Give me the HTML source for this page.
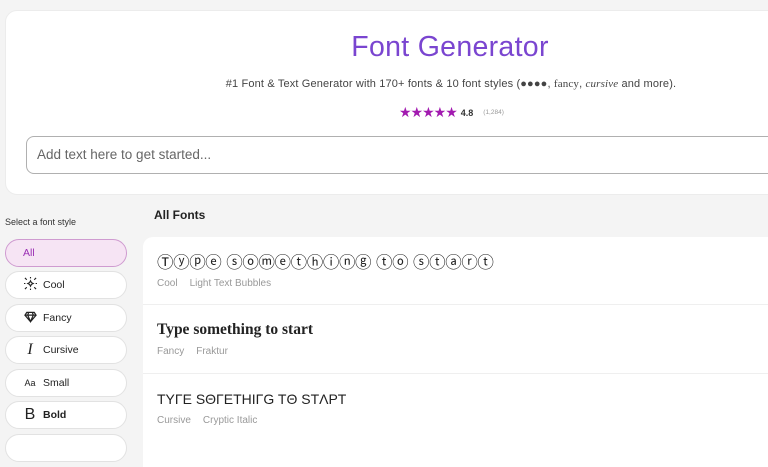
<!DOCTYPE html>
<html><head><meta charset="utf-8">
<style>
*{box-sizing:border-box;margin:0;padding:0}
html,body{width:768px;height:439px;overflow:hidden;background:#f4f4f4;font-family:"Liberation Sans","DejaVu Sans",sans-serif}
.card{position:absolute;left:5px;top:10px;width:800px;height:185px;background:#fff;border-radius:12px;border:1px solid #ececec}
.title{position:absolute;left:0;width:900px;top:31px;text-align:center;font-size:28.5px;color:#7a45d0;letter-spacing:0.3px}
.sub{position:absolute;left:0;width:902px;top:78px;text-align:center;font-size:11px;color:#444;letter-spacing:0.15px}
.rate{position:absolute;left:399px;top:104px;font-size:9px;color:#333;display:flex;align-items:center;gap:4px}
.rate .st{color:#a21ab0;font-size:14px;letter-spacing:-1px}
.rate .n{color:#999;font-size:6.5px;margin-left:6px}
.input{position:absolute;left:26px;top:136px;width:800px;height:38px;border:1.5px solid #b0b0b0;border-radius:8px;background:#fff;font-size:13.5px;color:#666;padding:10px 0 0 10px}
.lbl{position:absolute;left:5px;top:217px;font-size:9px;color:#333}
.btn{position:absolute;left:5px;width:122px;height:28px;border:1px solid #e2e2e2;border-radius:14px;background:#fff;font-size:10.5px;color:#222;display:flex;align-items:center;padding-left:17px;gap:6px}
.btn.on{background:#f6e4f4;border-color:#cf9bd0;color:#9a2fb3}
.ic{width:14px;text-align:center;font-size:13px}
.allf{position:absolute;left:154px;top:208px;font-size:12px;font-weight:bold;color:#222}
.res{position:absolute;left:143px;top:237px;width:700px;height:230px;background:#fff;border-radius:10px 0 0 0}
.row{position:absolute;left:0;width:700px;border-bottom:1px solid #efefef}
.row .t{position:absolute;left:14px;color:#222}
.row .m{position:absolute;left:14px;font-size:10px;color:#999}
.row .m span{margin-right:12px}
</style></head><body>
<div class="card"></div>
<div class="title">Font Generator</div>
<div class="sub">#1 Font &amp; Text Generator with 170+ fonts &amp; 10 font styles (<b>●●●●</b>, <span style="font-family:'Liberation Serif',serif">fancy</span>, <i style="font-family:'Liberation Serif',serif">cursive</i> and more).</div>
<div class="rate"><span class="st">★★★★★</span><b>4.8</b><span class="n">(1,284)</span></div>
<div class="input">Add text here to get started...</div>

<div class="lbl">Select a font style</div>
<div class="btn on" style="top:239px">All</div>
<div class="btn" style="top:271px"><span class="ic"><svg width="13" height="13" viewBox="0 0 14 14" fill="none" stroke="#222" stroke-width="1.2"><path d="M7 4 L8 6 L10 7 L8 8 L7 10 L6 8 L4 7 L6 6Z"/><path d="M1 1L3 3M13 1L11 3M1 13L3 11M13 13L11 11M7 0V1.5M7 12.5V14M0 7H1.5M12.5 7H14"/></svg></span>Cool</div>
<div class="btn" style="top:304px"><span class="ic"><svg width="13" height="12" viewBox="0 0 14 12" fill="none" stroke="#222" stroke-width="1.3"><path d="M3 1H11L13 4L7 11L1 4Z M1 4H13 M5 1L4 4L7 11L10 4L9 1"/></svg></span>Fancy</div>
<div class="btn" style="top:336px"><span class="ic" style="font-family:'Liberation Serif',serif;font-style:italic;font-size:16px">I</span>Cursive</div>
<div class="btn" style="top:369px"><span class="ic" style="font-size:9px">Aa</span>Small</div>
<div class="btn" style="top:401px"><span class="ic" style="font-size:16px;font-weight:normal">B</span><b>Bold</b></div>
<div class="btn" style="top:434px"></div>

<div class="allf">All Fonts</div>
<div class="res">
 <div class="row" style="top:0;height:68px">
  <div class="t" style="top:12px;font-family:'DejaVu Sans',sans-serif;font-size:16.5px;letter-spacing:-0.4px">Ⓣⓨⓟⓔ ⓢⓞⓜⓔⓣⓗⓘⓝⓖ ⓣⓞ ⓢⓣⓐⓡⓣ</div>
  <div class="m" style="top:41px"><span>Cool</span>Light Text Bubbles</div>
 </div>
 <div class="row" style="top:68px;height:69px">
  <div class="t" style="top:16px;font-family:'Liberation Serif',serif;font-weight:bold;font-size:15.5px">Type something to start</div>
  <div class="m" style="top:41px"><span>Fancy</span>Fraktur</div>
 </div>
 <div class="row" style="top:137px;height:80px;border:none">
  <div class="t" style="top:17px;font-size:14px;letter-spacing:0px">TYΓE ЅΘΓETHIΓG TΘ STΛPT</div>
  <div class="m" style="top:41px"><span>Cursive</span>Cryptic Italic</div>
 </div>
</div>
</body></html>
